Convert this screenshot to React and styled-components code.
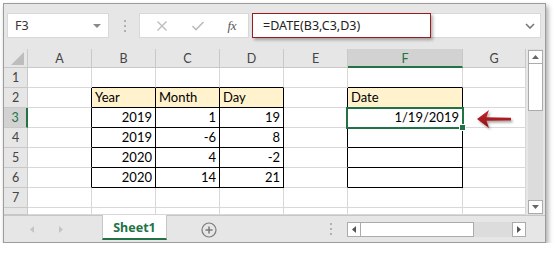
import React from 'react'
import styled, {createGlobalStyle, css} from 'styled-components'

const GlobalStyle = createGlobalStyle`
  body {
    margin: 0;
    background: #fff;
    font-family: "Lato", "Liberation Sans", sans-serif;
  }
`;

const COLS = ['A', 'B', 'C', 'D', 'E', 'F', 'G'];
const WIDTHS = [64, 64, 64, 64, 64, 115, 63];
const ROWS = [1, 2, 3, 4, 5, 6, 7];

const DATA = {
  B2: 'Year', C2: 'Month', D2: 'Day', F2: 'Date',
  B3: 2019, C3: 1, D3: 19, F3: '1/19/2019',
  B4: 2019, C4: -6, D4: 8,
  B5: 2020, C5: 4, D5: -2,
  B6: 2020, C6: 14, D6: 21,
};

const BOXES = [
  {c0: 1, c1: 3, r0: 2, r1: 6},
  {c0: 5, c1: 5, r0: 2, r1: 6},
];

const inBox = (c, r) => BOXES.some(b => c >= b.c0 && c <= b.c1 && r >= b.r0 && r <= b.r1);

const ACTIVE = {col: 'F', row: 3};
const GREEN = '#217346';

export default function App() {
  return (
    <>
      <GlobalStyle/>
      <Window>
        <Toolbar>
          <NameBox>
            <span>F3</span>
            <DropTri/>
          </NameBox>
          <VDots><i/><i/><i/></VDots>
          <FxBox>
            <svg width="12" height="12" viewBox="0 0 12 12">
              <path d="M1.5 1.5 L10.5 10.5 M10.5 1.5 L1.5 10.5" stroke="#bdbdbd" strokeWidth="1.4" fill="none"/>
            </svg>
            <svg width="14" height="12" viewBox="0 0 14 12">
              <path d="M1.5 6 L5 9.5 L12.5 2" stroke="#bdbdbd" strokeWidth="1.6" fill="none"/>
            </svg>
            <Fx>fx</Fx>
          </FxBox>
          <FormulaBar>
            <Highlight>=DATE(B3,C3,D3)</Highlight>
            <Chevron viewBox="0 0 10 6" width="10" height="6">
              <path d="M1 1 L5 5 L9 1" stroke="#777" strokeWidth="1.6" fill="none"/>
            </Chevron>
          </FormulaBar>
        </Toolbar>

        <Main>
          <SheetArea>
            <Grid>
              <Corner>
                <svg width="13" height="13" viewBox="0 0 13 13">
                  <path d="M13 0 L13 13 L0 13 Z" fill="#bdbdbd"/>
                </svg>
              </Corner>
              {COLS.map(c => (
                <ColHead key={c} $sel={c === ACTIVE.col}>{c}</ColHead>
              ))}
              {ROWS.map(r => (
                <React.Fragment key={r}>
                  <RowHead $sel={r === ACTIVE.row}>{r}</RowHead>
                  {COLS.map((c, ci) => {
                    const v = DATA[c + r];
                    const active = c === ACTIVE.col && r === ACTIVE.row;
                    const num = typeof v === 'number' || (typeof v === 'string' && /^\d/.test(v));
                    return (
                      <Cell
                        key={c}
                        $num={num}
                        $fill={r === 2 && inBox(ci, r)}
                        $rb={inBox(ci, r) || inBox(ci + 1, r)}
                        $bb={inBox(ci, r) || inBox(ci, r + 1)}
                        $active={active}
                      >
                        {v}
                        {active && <Handle/>}
                      </Cell>
                    );
                  })}
                </React.Fragment>
              ))}
              <RowHead/>
              {COLS.map(c => <Cell key={c}/>)}
            </Grid>
            <Arrow width="44" height="26" viewBox="0 0 44 26">
              <defs>
                <linearGradient id="ar" x1="0" y1="0" x2="0" y2="1">
                  <stop offset="0" stopColor="#c4282c"/>
                  <stop offset="1" stopColor="#8e1214"/>
                </linearGradient>
                <filter id="sh" x="-20%" y="-30%" width="150%" height="170%">
                  <feDropShadow dx="1.5" dy="2" stdDeviation="1.2" floodColor="#000" floodOpacity="0.35"/>
                </filter>
              </defs>
              <path d="M5 13 L17 4 L14.5 11.2 L39 11.8 L39 14.4 L14.5 14.8 L17 22 Z" fill="url(#ar)" filter="url(#sh)"/>
            </Arrow>
          </SheetArea>
          <VScroll>
            <ScrollBtn>
              <svg width="7" height="4" viewBox="0 0 7 4"><path d="M0 4 L3.5 0 L7 4 Z" fill="#666"/></svg>
            </ScrollBtn>
            <VThumb/>
            <Track/>
            <ScrollBtn>
              <svg width="7" height="4" viewBox="0 0 7 4"><path d="M0 0 L3.5 4 L7 0 Z" fill="#666"/></svg>
            </ScrollBtn>
          </VScroll>
        </Main>

        <TabBar>
          <NavArrows>
            <svg width="4" height="7" viewBox="0 0 4 7"><path d="M4 0 L0 3.5 L4 7 Z" fill="#c4c4c4"/></svg>
            <svg width="4" height="7" viewBox="0 0 4 7"><path d="M0 0 L4 3.5 L0 7 Z" fill="#c4c4c4"/></svg>
          </NavArrows>
          <SheetTab>Sheet1</SheetTab>
          <AddSheet viewBox="0 0 16 16" width="16" height="16">
            <circle cx="8" cy="8" r="7" stroke="#7a7a7a" strokeWidth="1.2" fill="none"/>
            <path d="M8 4.5 V11.5 M4.5 8 H11.5" stroke="#7a7a7a" strokeWidth="1.5"/>
          </AddSheet>
          <Spacer/>
          <VDots $small><i/><i/><i/></VDots>
          <HScroll>
            <ScrollBtn $h>
              <svg width="4" height="7" viewBox="0 0 4 7"><path d="M4 0 L0 3.5 L4 7 Z" fill="#555"/></svg>
            </ScrollBtn>
            <HThumb/>
            <Track/>
            <ScrollBtn $h>
              <svg width="4" height="7" viewBox="0 0 4 7"><path d="M0 0 L4 3.5 L0 7 Z" fill="#555"/></svg>
            </ScrollBtn>
          </HScroll>
        </TabBar>
      </Window>
    </>
  );
}

const Window = styled.div`
  box-sizing: border-box;
  margin: 3px 0 0 3px;
  width: 543px;
  height: 240px;
  border: 1px solid #9c9c9c;
  background: #e6e6e6;
  box-shadow: 2px 3px 5px rgba(0, 0, 0, 0.35);
  display: flex;
  flex-direction: column;
  overflow: hidden;
`;

const Toolbar = styled.div`
  height: 45px;
  flex: none;
  box-sizing: border-box;
  padding: 9px 4px 0 3px;
  display: flex;
  align-items: flex-start;
  font-family: "Noto Sans", "Open Sans", sans-serif;
`;

const BoxBase = css`
  box-sizing: border-box;
  height: 25px;
  background: #fff;
  border: 1px solid #d8d8d8;
  display: flex;
  align-items: center;
`;

const NameBox = styled.div`
  ${BoxBase};
  width: 102px;
  padding: 0 7px 0 7px;
  justify-content: space-between;
  font-size: 12.5px;
  color: #333;
`;

const DropTri = styled.span`
  width: 0;
  height: 0;
  border-left: 4px solid transparent;
  border-right: 4px solid transparent;
  border-top: 4px solid #8a8a8a;
`;

const VDots = styled.div`
  display: flex;
  flex-direction: column;
  gap: 3px;
  margin: ${p => p.$small ? '0 15px 0 0' : '7px 13px 0 15px'};
  i {
    display: block;
    width: 2px;
    height: 2px;
    background: #b0b0b0;
  }
`;

const FxBox = styled.div`
  ${BoxBase};
  width: 110px;
  padding: 0 12px 0 16px;
  justify-content: space-between;
`;

const Fx = styled.span`
  font-family: "Liberation Serif", serif;
  font-style: italic;
  font-size: 13px;
  color: #555;
  letter-spacing: -0.5px;
`;

const FormulaBar = styled.div`
  ${BoxBase};
  flex: 1;
  margin-left: 3px;
  padding-right: 5px;
  justify-content: space-between;
`;

const Highlight = styled.div`
  box-sizing: border-box;
  align-self: stretch;
  margin: -1px 0 -1px -1px;
  width: 179px;
  border: 1px solid #9b1b1e;
  box-shadow: 2px 2px 3px rgba(0, 0, 0, 0.3);
  padding-left: 10px;
  display: flex;
  align-items: center;
  font-size: 12.5px;
  color: #222;
`;

const Chevron = styled.svg`
  display: block;
`;

const Main = styled.div`
  flex: none;
  height: 166px;
  display: flex;
`;

const SheetArea = styled.div`
  position: relative;
`;

const Grid = styled.div`
  display: grid;
  grid-template-columns: 24px ${WIDTHS.map(w => w + 'px').join(' ')};
  grid-template-rows: 19px repeat(7, 20px) 7px;
  background: #fff;
  overflow: hidden;
`;

const HeadBase = css`
  box-sizing: border-box;
  display: flex;
  align-items: center;
  justify-content: center;
  background: #e6e6e6;
  font-size: 12.5px;
  color: #444;
  border-right: 1px solid #c8c8c8;
  border-bottom: 1px solid #c8c8c8;
`;

const Corner = styled.div`
  ${HeadBase};
  align-items: flex-end;
  justify-content: flex-end;
  padding: 0 3px 2px 0;
`;

const ColHead = styled.div`
  ${HeadBase};
  ${p => p.$sel && css`
    background: #d2d2d2;
    color: ${GREEN};
    border-bottom: 2px solid ${GREEN};
    padding-top: 1px;
  `}
`;

const RowHead = styled.div`
  ${HeadBase};
  ${p => p.$sel && css`
    background: #d2d2d2;
    color: ${GREEN};
    border-right: 2px solid ${GREEN};
  `}
`;

const Cell = styled.div`
  box-sizing: border-box;
  position: relative;
  display: flex;
  align-items: flex-end;
  justify-content: ${p => p.$num ? 'flex-end' : 'flex-start'};
  padding: 0 3px 2px 3px;
  background: ${p => p.$fill ? '#fff2cc' : '#fff'};
  border-right: 1px solid ${p => p.$rb ? '#000' : '#d8d8d8'};
  border-bottom: 1px solid ${p => p.$bb ? '#000' : '#d8d8d8'};
  font-size: 13px;
  line-height: 15px;
  color: #000;
  ${p => p.$active && css`
    z-index: 2;
    &::after {
      content: '';
      position: absolute;
      left: -2px;
      top: -1px;
      right: -2px;
      bottom: -2px;
      border: 2px solid ${GREEN};
    }
  `}
`;

const Handle = styled.span`
  position: absolute;
  right: -4px;
  bottom: -4px;
  width: 5px;
  height: 5px;
  background: ${GREEN};
  border: 1px solid #fff;
  z-index: 3;
`;

const Arrow = styled.svg`
  position: absolute;
  left: 468px;
  top: 57px;
`;

const VScroll = styled.div`
  box-sizing: border-box;
  width: 15px;
  margin-left: 2px;
  padding: 1px 0 1px;
  display: flex;
  flex-direction: column;
  background: #dcdcdc;
`;

const ScrollBtn = styled.div`
  box-sizing: border-box;
  flex: none;
  width: ${p => p.$h ? '14px' : '15px'};
  height: ${p => p.$h ? '15px' : '14px'};
  background: #fff;
  border: 1px solid #ababab;
  display: flex;
  align-items: center;
  justify-content: center;
`;

const VThumb = styled.div`
  box-sizing: border-box;
  height: 47px;
  background: #fff;
  border: 1px solid #ababab;
  border-top: none;
`;

const Track = styled.div`
  flex: 1;
  background: #dcdcdc;
`;

const TabBar = styled.div`
  flex: 1;
  box-sizing: border-box;
  border-top: 1px solid #c6c6c6;
  display: flex;
  align-items: center;
  padding-right: 19px;
`;

const NavArrows = styled.div`
  width: 98px;
  box-sizing: border-box;
  padding-left: 26px;
  display: flex;
  gap: 25px;
  align-items: center;
  svg { display: block; }
`;

const SheetTab = styled.div`
  box-sizing: border-box;
  align-self: stretch;
  margin: -1px 0 2px;
  width: 65px;
  background: #fff;
  border-left: 1px solid #c6c6c6;
  border-right: 1px solid #c6c6c6;
  border-bottom: 2px solid ${GREEN};
  display: flex;
  align-items: center;
  justify-content: center;
  padding-top: 2px;
  font-family: "Noto Sans", "Open Sans", sans-serif;
  font-weight: 700;
  font-size: 12.5px;
  color: ${GREEN};
`;

const AddSheet = styled.svg`
  display: block;
  margin: 1px 0 0 34px;
`;

const Spacer = styled.div`
  flex: 1;
`;

const HScroll = styled.div`
  width: 179px;
  height: 15px;
  display: flex;
  margin-top: 1px;
`;

const HThumb = styled.div`
  box-sizing: border-box;
  width: 113px;
  background: #fff;
  border: 1px solid #ababab;
  border-left: none;
`;
